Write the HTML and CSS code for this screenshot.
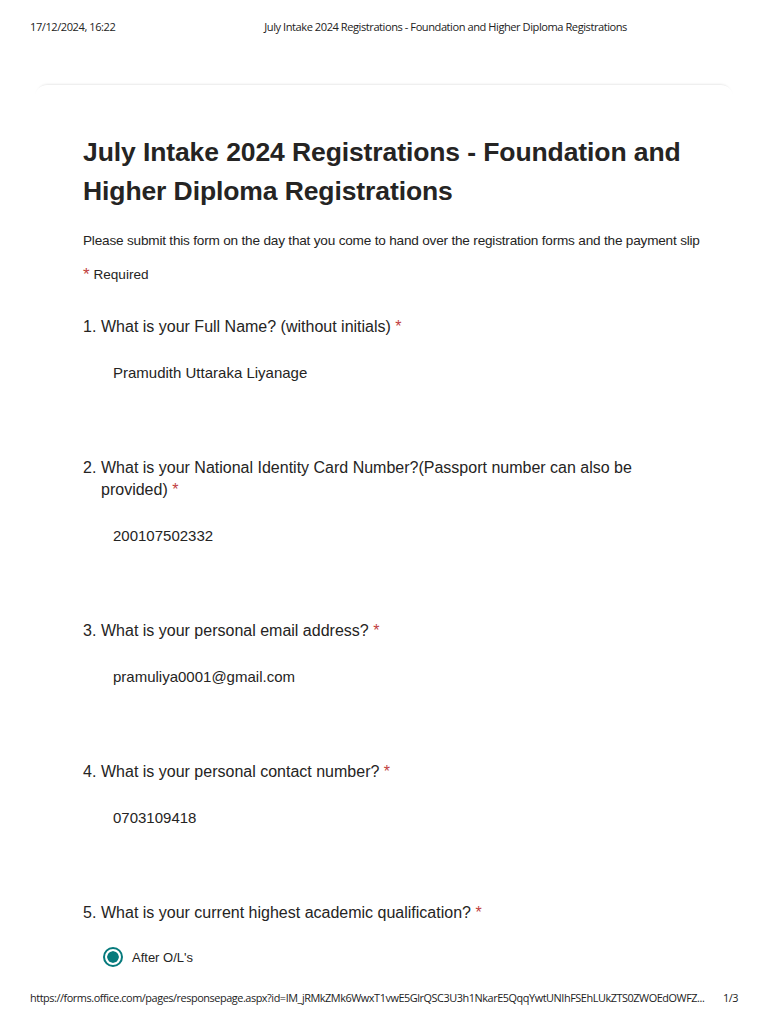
FILE: index.html
```html
<!DOCTYPE html>
<html>
<head>
<meta charset="utf-8">
<link rel="stylesheet" href="styles.css">
</head>
<body>
<div class="page">
  <header class="print-head">
    <span class="date">17/12/2024, 16:22</span>
    <span class="doc-title">July Intake 2024 Registrations - Foundation and Higher Diploma Registrations</span>
  </header>
  <main class="sheet">
    <section class="card">
      <h1 class="form-title">July Intake 2024 Registrations - Foundation and Higher Diploma Registrations</h1>
      <p class="desc">Please submit this form on the day that you come to hand over the registration forms and the payment slip</p>
      <p class="required"><span class="star">*</span> Required</p>

      <div class="question">
        <div class="q-title"><span class="num">1.</span><span class="q-text">What is your Full Name? (without initials) <span class="star">*</span></span></div>
        <div class="answer">Pramudith Uttaraka Liyanage</div>
      </div>
      <div class="question">
        <div class="q-title"><span class="num">2.</span><span class="q-text">What is your National Identity Card Number?(Passport number can also be provided) <span class="star">*</span></span></div>
        <div class="answer">200107502332</div>
      </div>
      <div class="question">
        <div class="q-title"><span class="num">3.</span><span class="q-text">What is your personal email address? <span class="star">*</span></span></div>
        <div class="answer">pramuliya0001@gmail.com</div>
      </div>
      <div class="question">
        <div class="q-title"><span class="num">4.</span><span class="q-text">What is your personal contact number? <span class="star">*</span></span></div>
        <div class="answer">0703109418</div>
      </div>
      <div class="question">
        <div class="q-title"><span class="num">5.</span><span class="q-text">What is your current highest academic qualification? <span class="star">*</span></span></div>
        <div class="option"><span class="radio"></span><span class="opt-label">After O/L's</span></div>
      </div>
    </section>
  </main>
  <footer class="print-foot">
    <span class="url">https://forms.office.com/pages/responsepage.aspx?id=IM_jRMkZMk6WwxT1vwE5GlrQSC3U3h1NkarE5QqqYwtUNIhFSEhLUkZTS0ZWOEdOWFZ...</span>
    <span class="pageno">1/3</span>
  </footer>
</div>
</body>
</html>
```
FILE: styles.css
```css
* { box-sizing: border-box; }
html, body { margin: 0; padding: 0; background: #fff; }
body { font-family: "Liberation Sans", Arial, sans-serif; color: #252423; }

.page {
  width: 768px;
  height: 1024px;
  display: flex;
  flex-direction: column;
  overflow: hidden;
}

.print-head, .print-foot {
  font-family: "Open Sans", "Noto Sans", sans-serif;
  font-size: 11.1px;
  letter-spacing: -0.45px;
  color: #222;
  display: flex;
  align-items: center;
  padding: 0 45px 0 30px;
}
.print-head { height: 52px; }
.print-head .doc-title { margin-left: 149px; }

.sheet {
  flex: 1;
  overflow: hidden;
  padding: 33px 35px 0 35px;
}

.card {
  background: #fff;
  border-radius: 12px 12px 0 0;
  box-shadow: 0 -3px 3px -3px rgba(0,0,0,0.18);
  padding: 48px 48px 0 48px;
  height: 100%;
}

.form-title {
  margin: 0;
  font-size: 26.5px;
  line-height: 39px;
  font-weight: bold;
  color: #252423;
  letter-spacing: -0.1px;
}

.desc {
  margin: 21px -30px 0 0;
  font-size: 13.6px;
  line-height: 18px;
  letter-spacing: -0.2px;
  white-space: nowrap;
  color: #252423;
}

.required {
  margin: 16px 0 0 0;
  font-size: 13.6px;
  line-height: 18px;
  color: #252423;
}
.star { color: #c13e3e; }
.required .star { font-size: 17px; vertical-align: -1px; }

.question { margin-top: 32px; }
.question + .question { margin-top: 74px; }

.q-title {
  display: flex;
  font-size: 16px;
  line-height: 22px;
  color: #252423;
}
.q-title .num { width: 18px; flex: none; }
.q-title .q-text { flex: 1; }

.answer {
  margin-top: 25px;
  padding-left: 30px;
  font-size: 15px;
  line-height: 20px;
  color: #252423;
}

.option {
  display: flex;
  align-items: center;
  margin-top: 23px;
  padding-left: 20px;
}
.radio {
  width: 20px;
  height: 20px;
  border-radius: 50%;
  border: 2px solid #067a7c;
  padding: 2px;
  background: #067a7c;
  background-clip: content-box;
  box-shadow: inset 0 0 0 2px #fff;
  flex: none;
}
.opt-label {
  margin-left: 9px;
  font-size: 13px;
  color: #252423;
}

.print-foot {
  height: 52px;
  padding-bottom: 2px;
  padding-right: 30px;
  font-size: 10.9px;
}
.print-foot .url { flex: 1; min-width: 0; }
.print-foot .pageno { flex: none; margin-left: 14px; }
```
